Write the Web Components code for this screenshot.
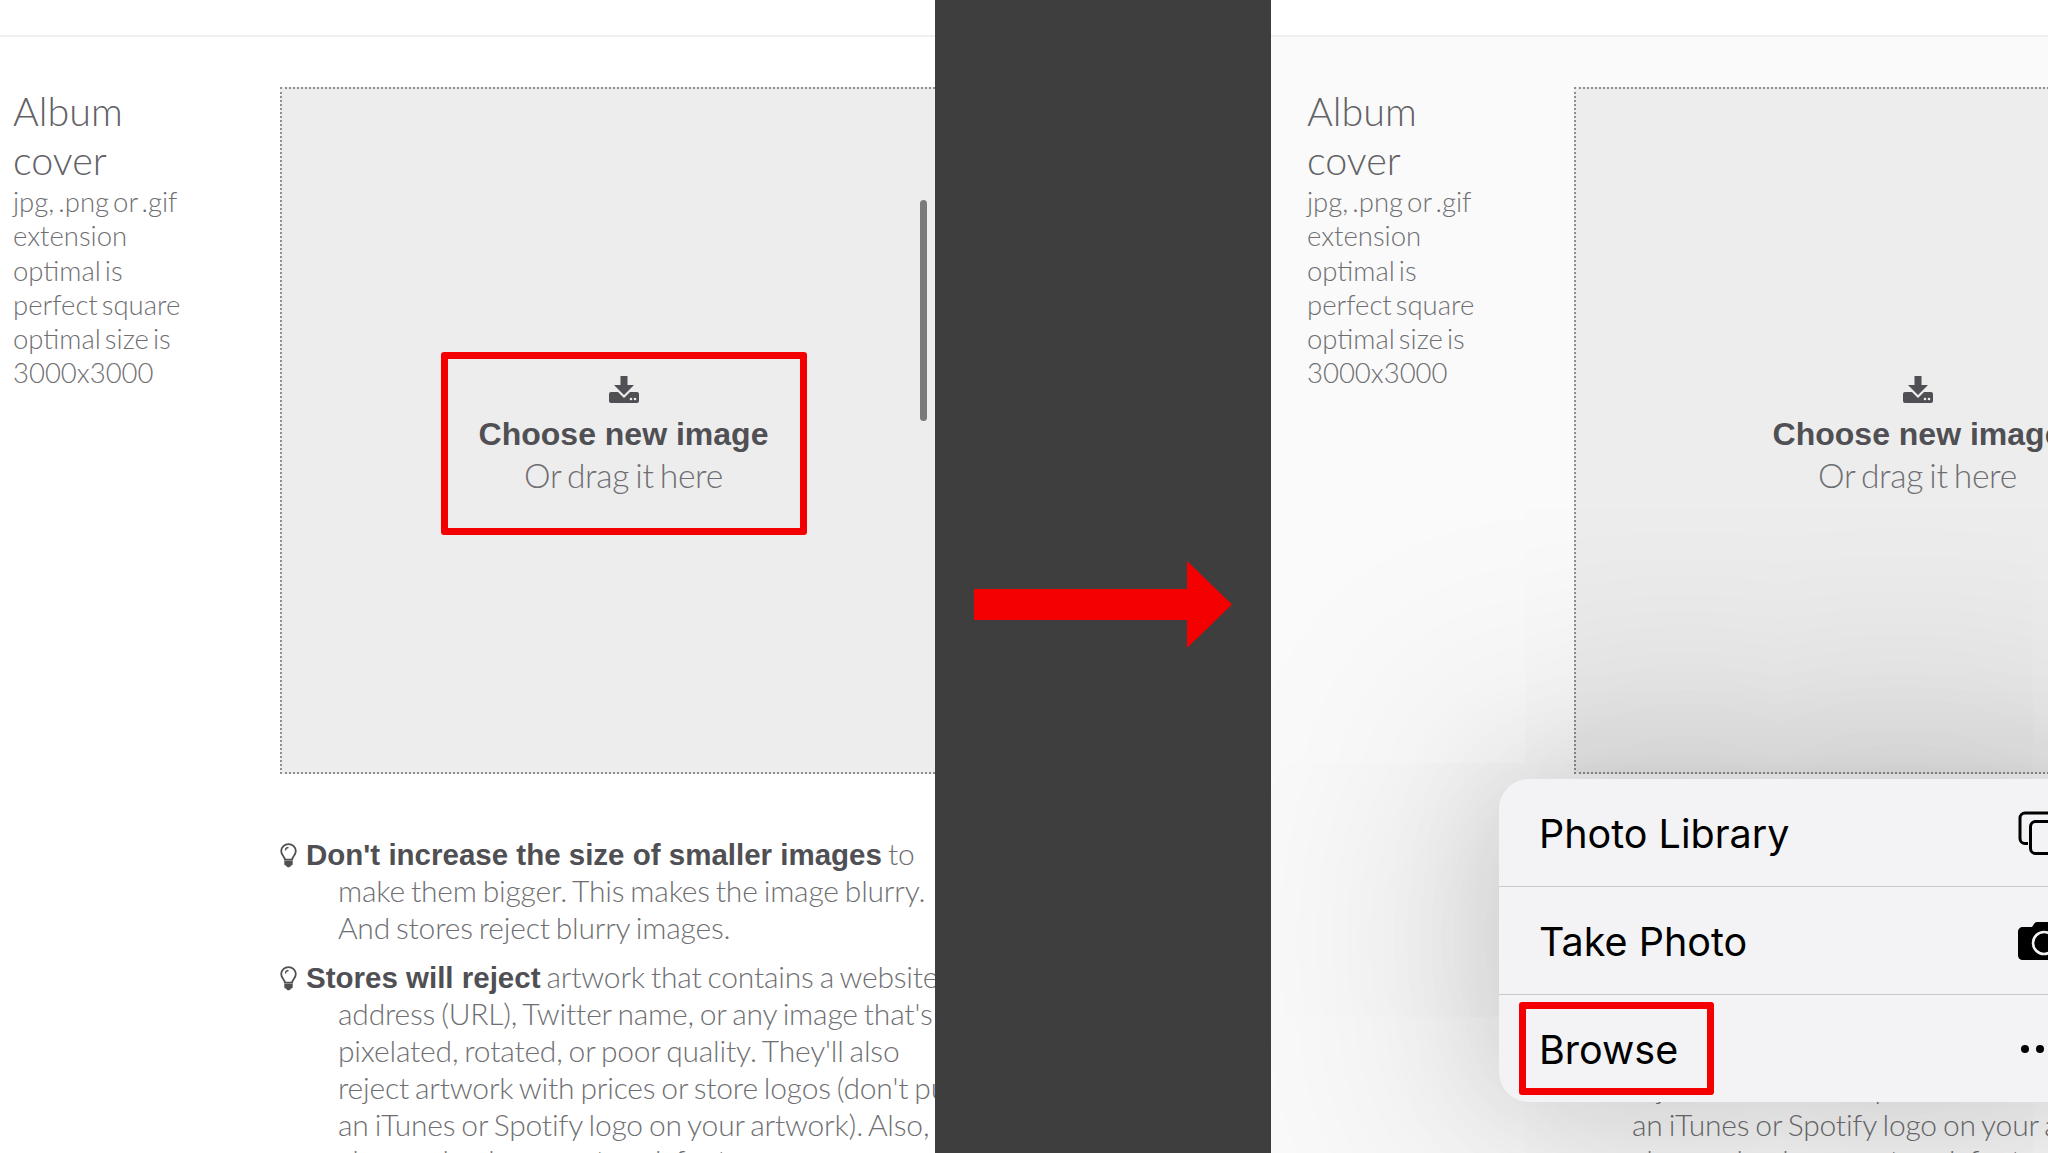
<!DOCTYPE html>
<html>
<head>
<meta charset="utf-8">
<title>Album cover upload</title>
<style>
  html, body { margin: 0; height: 100%; background: #fff; }
  body { overflow: hidden; }
  #stage { display: flex; width: 2048px; height: 1153px; overflow: hidden; }
</style>
</head>
<body>
<div id="stage">
  <shot-panel width="935">
    <upload-page gutter="13" marked scrollbar></upload-page>
  </shot-panel>
  <arrow-divider></arrow-divider>
  <shot-panel width="777">
    <upload-page gutter="36" tint></upload-page>
    <action-menu>
      <menu-row icon="library">Photo Library</menu-row>
      <menu-row icon="camera">Take Photo</menu-row>
      <menu-row icon="more" marked>Browse</menu-row>
    </action-menu>
  </shot-panel>
</div>

<script>
class ShotPanel extends HTMLElement {
  constructor() {
    super();
    this.attachShadow({ mode: "open" });
  }

  connectedCallback() {
    const width = this.getAttribute("width") || "800";
    this.shadowRoot.innerHTML = `
      <style>
        :host {
          display: block;
          position: relative;
          flex: none;
          width: ${width}px;
          height: 1153px;
          overflow: hidden;
          background: #fff;
        }
      </style>
      <slot></slot>
    `;
  }
}
customElements.define("shot-panel", ShotPanel);

class ArrowDivider extends HTMLElement {
  constructor() {
    super();
    this.attachShadow({ mode: "open" });
    this.shadowRoot.innerHTML = `
      <style>
        :host {
          display: flex;
          flex: none;
          width: 336px;
          height: 1153px;
          align-items: center;
          justify-content: center;
          background: #3e3e3e;
        }
        svg { display: block; width: 258px; height: 87px; margin-top: 56px; }
      </style>
      <svg viewBox="0 0 258 87"><path fill="#f40000" d="M0 28h213V0l45 43.500-45 43.500V59H0z"/></svg>
    `;
  }
}
customElements.define("arrow-divider", ArrowDivider);

class DropZone extends HTMLElement {
  constructor() {
    super();
    this.attachShadow({ mode: "open" });
    this.shadowRoot.innerHTML = `
      <style>
        :host {
          display: flex;
          flex: none;
          box-sizing: border-box;
          width: 687px;
          height: 687px;
          padding-top: 25px;
          align-items: center;
          justify-content: center;
          background: #ededed;
          border: 2px dotted #8f8f8f;
        }
        .cta {
          box-sizing: border-box;
          width: 366px;
          height: 183px;
          padding-top: 17px;
          display: flex;
          flex-direction: column;
          align-items: center;
          border: 7px solid transparent;
          border-radius: 3px;
        }
        :host([marked]) .cta { border-color: #f40000; }
        svg { display: block; width: 30px; height: 27px; }
        b {
          margin-top: 11px;
          font: bold 32px/40px "Liberation Sans", sans-serif;
          color: #4f4f54;
        }
        span {
          margin-top: 1px;
          font: 300 33.600px/40px Lato, sans-serif;
          letter-spacing: -.3px;
          word-spacing: -2.700px;
          color: #6f6f73;
        }
      </style>
      <div class="cta">
        <svg viewBox="0 0 30 27">
          <path fill="#4f4f54" d="M11.500 0h7v9H25l-10 10L5 9h6.500z"/>
          <path fill="#4f4f54" d="M2 16h7l6 6 6-6h7a2 2 0 0 1 2 2v7a2 2 0 0 1-2 2H2a2 2 0 0 1-2-2v-7a2 2 0 0 1 2-2z"/>
          <circle cx="22" cy="23" r="1.300" fill="#ededed"/>
          <circle cx="26" cy="23" r="1.300" fill="#ededed"/>
        </svg>
        <b>Choose new image</b>
        <span>Or drag it here</span>
      </div>
    `;
  }
}
customElements.define("drop-zone", DropZone);

class TipItem extends HTMLElement {
  constructor() {
    super();
    this.attachShadow({ mode: "open" });
    this.shadowRoot.innerHTML = `
      <style>
        :host {
          display: block;
          padding-left: 58px;
          text-indent: -58px;
          white-space: nowrap;
          font: 300 30px/36.800px Lato, sans-serif;
          letter-spacing: -.2px;
          word-spacing: -1.900px;
          color: #6f6f73;
        }
        svg {
          display: inline-block;
          width: 17px;
          height: 25px;
          margin: -6px 9px -6px 0;
          vertical-align: 3.500px;
        }
        ::slotted(b) {
          font: bold 29.500px/1 "Liberation Sans", sans-serif;
          letter-spacing: 0;
          word-spacing: 0;
          color: #4f4f54;
        }
      </style>
      <svg viewBox="0 0 17 25">
        <path fill="none" stroke="#4f4f54" stroke-width="1.800" d="M8.500 1.200c-4 0-7.300 3-7.300 6.900 0 2.100.9 3.500 2 4.900.9 1.200 1.500 2.200 1.700 3.600h7.200c.2-1.400.8-2.400 1.700-3.600 1.100-1.400 2-2.800 2-4.900 0-3.900-3.300-6.900-7.300-6.900z"/>
        <path fill="none" stroke="#4f4f54" stroke-width="1.300" d="M5.500 7.500c0-1.700 1.400-3 3-3"/>
        <path fill="#4f4f54" d="M4.300 17.800h8.400v3.400c0 .8-1 1.300-2 1.500-.3 1-1.200 1.500-2.200 1.500s-1.900-.5-2.200-1.500c-1-.2-2-.7-2-1.500z"/>
      </svg><slot></slot>
    `;
  }
}
customElements.define("tip-item", TipItem);

class UploadPage extends HTMLElement {
  constructor() {
    super();
    this.attachShadow({ mode: "open" });
  }

  connectedCallback() {
    const gutter = Number(this.getAttribute("gutter") || "13");
    const marked = this.hasAttribute("marked") ? "marked" : "";
    const bar = this.hasAttribute("scrollbar") ? '<div class="scrollbar"></div>' : "";

    this.shadowRoot.innerHTML = `
      <style>
        :host { display: block; height: 1153px; overflow: hidden; }
        :host([tint]) .body { background: #fafafa; }
        .top { height: 35px; border-bottom: 2px solid #eef0f3; }
        .body { height: 1116px; }
        .field {
          display: flex;
          padding: 50px 0 0 ${gutter}px;
        }
        .label {
          flex: none;
          width: 267px;
          margin-top: -1px;
          color: #6f6f73;
          font-family: Lato, sans-serif;
          font-weight: 300;
        }
        h3 { margin: 0; font: inherit; font-size: 39.500px; line-height: 49px; color: #626266; word-spacing: -3px; }
        p { margin: 1px 0 0; font-size: 27.500px; line-height: 34.300px; word-spacing: -3.500px; }
        .tips {
          display: flex;
          flex-direction: column;
          gap: 13px;
          padding: 61px 0 0 ${gutter + 267}px;
        }
        .scrollbar {
          position: absolute;
          top: 200px;
          left: 920px;
          width: 7px;
          height: 221px;
          border-radius: 4px;
          background: #7a7a7a;
        }
      </style>
      <div class="top"></div>
      <div class="body">
        <div class="field">
          <div class="label">
            <h3>Album<br>cover</h3>
            <p>jpg, .png or .gif<br>extension<br>optimal is<br>perfect square<br>optimal size is<br>3000x3000</p>
          </div>
          <drop-zone ${marked}></drop-zone>
        </div>
        <div class="tips">
          <tip-item><b>Don't increase the size of smaller images</b> to<br>make them bigger. This makes the image blurry.<br>And stores reject blurry images.</tip-item>
          <tip-item><b>Stores will reject</b> artwork that contains a website<br>address (URL), Twitter name, or any image that's<br>pixelated, rotated, or poor quality. They'll also<br>reject artwork with prices or store logos (don't put<br>an iTunes or Spotify logo on your artwork). Also,<br>always check your artwork for typos.</tip-item>
        </div>
      </div>
      ${bar}
    `;
  }
}
customElements.define("upload-page", UploadPage);

class ActionMenu extends HTMLElement {
  constructor() {
    super();
    this.attachShadow({ mode: "open" });
    this.shadowRoot.innerHTML = `
      <style>
        :host {
          display: block;
          position: absolute;
          left: 228px;
          top: 779px;
          width: 620px;
          border-radius: 30px;
          background: #f3f3f5;
          box-shadow: 0 0 120px rgba(0, 0, 0, .12), 0 0 300px 50px rgba(0, 0, 0, .15);
        }
      </style>
      <slot></slot>
    `;
  }
}
customElements.define("action-menu", ActionMenu);

const MENU_ICONS = {
  library: `<svg viewBox="0 0 52 44" fill="none" stroke="#000" stroke-width="3">
      <path d="M10 32.500H7a5 5 0 0 1-5-5V7a5 5 0 0 1 5-5h36"/>
      <rect x="12.500" y="10.500" width="38" height="32" rx="5"/>
    </svg>`,
  camera: `<svg viewBox="0 0 52 38">
      <path fill="#000" d="M5 5h9l2-3c.7-1.300 1.700-2 3-2h14c1.300 0 2.300.7 3 2l2 3h9c3 0 5 2 5 5v23c0 3-2 5-5 5H5c-3 0-5-2-5-5V10c0-3 2-5 5-5z"/>
      <circle cx="26" cy="21" r="11" fill="none" stroke="#f3f3f5" stroke-width="2.600"/>
    </svg>`,
  more: `<svg viewBox="0 0 52 16">
      <circle cx="7" cy="8" r="4" fill="#000"/>
      <circle cx="22" cy="8" r="4" fill="#000"/>
      <circle cx="37" cy="8" r="4" fill="#000"/>
    </svg>`
};

class MenuRow extends HTMLElement {
  constructor() {
    super();
    this.attachShadow({ mode: "open" });
  }

  connectedCallback() {
    const icon = MENU_ICONS[this.getAttribute("icon")] || "";
    this.shadowRoot.innerHTML = `
      <style>
        :host {
          display: flex;
          box-sizing: border-box;
          height: 108px;
          align-items: center;
          justify-content: space-between;
          padding: 0 49px 0 20px;
          border-bottom: 1.500px solid #c8c8ca;
          font: 39.500px "Inter", sans-serif;
          color: #000;
        }
        :host(:last-child) { height: 107px; border-bottom: 0; }
        .name {
          display: flex;
          box-sizing: border-box;
          align-items: center;
          height: 93px;
          width: 195px;
          padding: 2px 0 0 13px;
          border: 7px solid transparent;
          border-radius: 3px;
          white-space: nowrap;
        }
        :host([marked]) .name { border-color: #f40000; }
        .icon { flex: none; width: 52px; display: flex; align-items: center; }
        svg { display: block; width: 52px; }
      </style>
      <span class="name"><slot></slot></span>
      <span class="icon">${icon}</span>
    `;
  }
}
customElements.define("menu-row", MenuRow);
</script>
</body>
</html>
